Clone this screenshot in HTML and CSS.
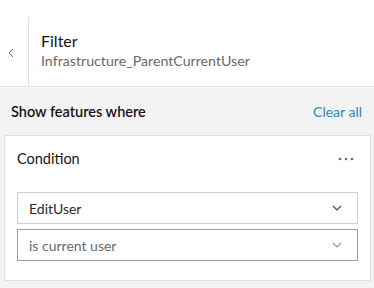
FILE: index.html
```html
<!DOCTYPE html>
<html lang="en">
<head>
    <meta charset="UTF-8">
    <meta name="viewport" content="width=device-width, initial-scale=1.0">
    <title>Filter</title>
    <link rel="stylesheet" href="styles.css">
</head>
<body>
    <div class="panel-header">
        <button class="back-btn" aria-label="Back">
            <svg width="8" height="10" viewBox="0 0 8 10"><path d="M6 1 L2 5 L6 9" fill="none" stroke="#6a6a6a" stroke-width="1"/></svg>
        </button>
        <div class="heading">
            <div class="title">Filter</div>
            <div class="subtitle">Infrastructure_ParentCurrentUser</div>
        </div>
    </div>

    <div class="toolbar">
        <span class="toolbar-label">Show features where</span>
        <a class="clear-link" href="#">Clear all</a>
    </div>

    <div class="card">
        <div class="card-header">
            <span class="card-title">Condition</span>
            <span class="more">
                <svg width="16" height="4" viewBox="0 0 16 4"><circle cx="2" cy="2" r="1.3" fill="#6a6a6a"/><circle cx="8" cy="2" r="1.3" fill="#6a6a6a"/><circle cx="14" cy="2" r="1.3" fill="#6a6a6a"/></svg>
            </span>
        </div>
        <div class="select">
            <span>EditUser</span>
            <svg width="10" height="6" viewBox="0 0 10 6"><path d="M1 1 L5 5 L9 1" fill="none" stroke="#4a4a4a" stroke-width="1.2"/></svg>
        </div>
        <div class="select select-muted">
            <span>is current user</span>
            <svg width="10" height="6" viewBox="0 0 10 6"><path d="M1 1 L5 5 L9 1" fill="none" stroke="#9a9a9a" stroke-width="1.2"/></svg>
        </div>
    </div>
</body>
</html>
```

FILE: styles.css
```css
* {
    margin: 0;
    padding: 0;
    box-sizing: border-box;
}

body {
    font-family: 'Lato', 'Open Sans', sans-serif;
    background: #f3f3f3;
    color: #151515;
}

.panel-header {
    display: flex;
    background: white;
    padding-top: 17px;
    height: 87px;
    border-bottom: 1px solid #e2e2e2;
}

.back-btn {
    width: 29px;
    border: none;
    border-right: 1px solid #e2e2e2;
    background: white;
    display: flex;
    align-items: center;
    justify-content: center;
    padding-right: 6px;
    padding-top: 2px;
}

.heading {
    padding-left: 12px;
    padding-top: 14px;
}

.title {
    font-size: 16px;
    line-height: 20px;
    color: #151515;
}

.subtitle {
    font-size: 14.2px;
    line-height: 19px;
    color: #6a6a6a;
}

.toolbar {
    display: flex;
    justify-content: space-between;
    align-items: center;
    height: 48px;
    padding: 0 12px 0 11px;
}

.toolbar-label {
    font-size: 14.5px;
    font-weight: 600;
    color: #151515;
}

.clear-link {
    font-size: 14px;
    color: #2f87b7;
    text-decoration: none;
}

.card {
    margin: 0 3px 0 4px;
    background: white;
    border: 1px solid #dfdfdf;
    padding: 0 12px 19px 12px;
}

.card-header {
    display: flex;
    justify-content: space-between;
    align-items: center;
    height: 46px;
    padding-bottom: 1px;
}

.card-title {
    font-size: 14.5px;
    color: #151515;
}

.more {
    display: flex;
    padding-right: 4px;
}

.select {
    display: flex;
    justify-content: space-between;
    align-items: center;
    height: 32px;
    margin-top: 10px;
    border: 1px solid #cfcfcf;
    padding: 0 15px 0 11px;
    font-size: 14px;
    color: #2b2b2b;
}

.select + .select {
    margin-top: 5px;
}

.select-muted {
    border-color: #9c9c9c;
    color: #6a6a6a;
}
```
